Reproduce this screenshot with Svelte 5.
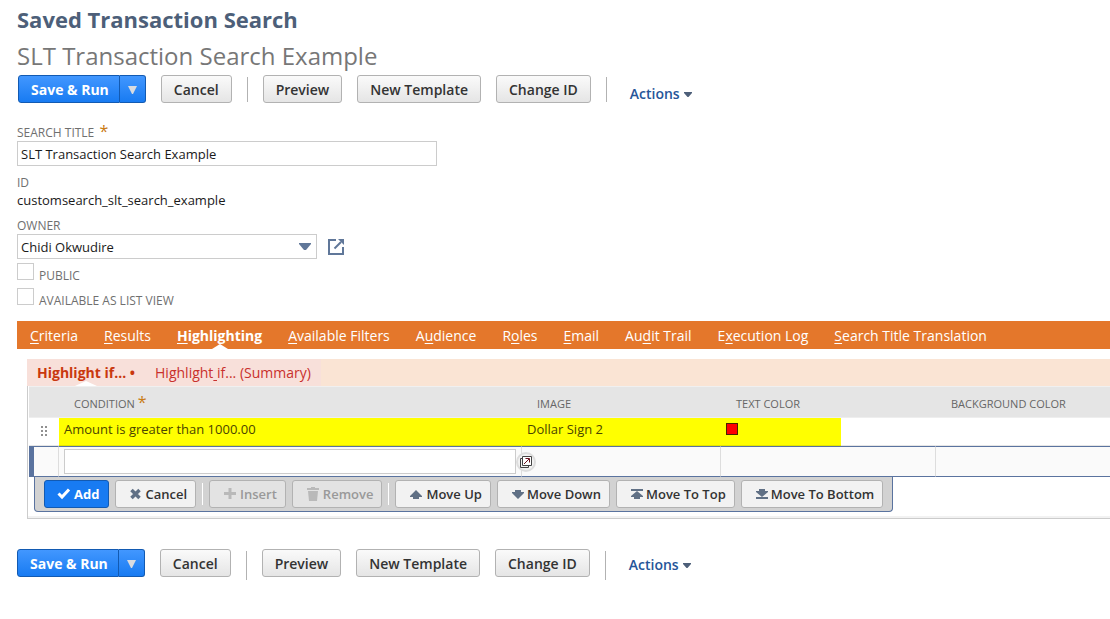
<script>
  // "key" is the index of the underlined access key letter
  const tabs = [
    { label: 'Criteria', key: 0 },
    { label: 'Results', key: 0 },
    { label: 'Highlighting', key: 0 },
    { label: 'Available Filters', key: 0 },
    { label: 'Audience', key: 1 },
    { label: 'Roles', key: 1 },
    { label: 'Email', key: 0 },
    { label: 'Audit Trail', key: 2 },
    { label: 'Execution Log', key: 1 },
    { label: 'Search Title Translation', key: 0 }
  ];

  let activeTab = 'Highlighting';
  let title = 'SLT Transaction Search Example';
  let owner = 'Chidi Okwudire';
  let isPublic = false;
  let listView = false;
  let condition = '';
</script>

{#snippet buttonBar(place)}
  <div class="button-bar {place}">
    <div class="split">
      <button class="btn primary">Save &amp; Run</button>
      <button class="btn primary arrow" aria-label="More save options">
        <svg width="9" height="8" viewBox="0 0 9 8"><path d="M0 0h9L5 8H4z" fill="#d8dbe0" /></svg>
      </button>
    </div>
    <button class="btn">Cancel</button>
    <span class="separator"></span>
    <button class="btn">Preview</button>
    <button class="btn">New Template</button>
    <button class="btn">Change ID</button>
    <span class="separator"></span>
    <a class="actions" href="#actions">
      Actions
      <svg width="8" height="5" viewBox="0 0 8 5"><path d="M0 0h8v1L4.500 5h-1L0 1z" fill="#4d5f79" /></svg>
    </a>
  </div>
{/snippet}

<main>
  <h1>Saved Transaction Search</h1>
  <h2>SLT Transaction Search Example</h2>

  {@render buttonBar('top')}

  <form on:submit|preventDefault>
    <div class="field">
      <label for="title">SEARCH TITLE <span class="required wide">*</span></label>
      <input id="title" class="text" type="text" bind:value={title} />
    </div>
    <div class="field">
      <span class="label">ID</span>
      <span class="value">customsearch_slt_search_example</span>
    </div>
    <div class="field">
      <label for="owner">OWNER</label>
      <div class="owner-row">
        <div class="select">
          <select id="owner" bind:value={owner}>
            <option>Chidi Okwudire</option>
          </select>
          <svg width="12" height="7" viewBox="0 0 12 7"><path d="M0 0h12v1L7 7H5L0 1z" fill="#607799" /></svg>
        </div>
        <a href="#owner" aria-label="Open owner">
          <svg width="16" height="16" viewBox="0 0 16 16" fill="none" stroke="#607799" stroke-width="2">
            <path d="M8 1H1v14h14V8" />
            <path d="M6.500 9.500L13 3" />
            <path d="M10 0h6v6z" fill="#607799" stroke="none" />
          </svg>
        </a>
      </div>
    </div>
    <label class="check"><input type="checkbox" bind:checked={isPublic} /><span>PUBLIC</span></label>
    <label class="check"><input type="checkbox" bind:checked={listView} /><span>AVAILABLE AS LIST VIEW</span></label>
  </form>

  <nav class="tabs">
    {#each tabs as tab}
      <a
        href="#tab"
        class:active={tab.label === activeTab}
        on:click|preventDefault={() => (activeTab = tab.label)}
      >{tab.label.slice(0, tab.key)}<u>{tab.label[tab.key]}</u>{tab.label.slice(tab.key + 1)}</a>
    {/each}
  </nav>

  <section class="panel">
    <nav class="subtabs">
      <a href="#highlight" class="active">Highlight if... •</a>
      <a href="#summary">Highlight<u>&nbsp;</u>if... (Summary)</a>
    </nav>

    <div class="machine">
      <table>
        <colgroup>
          <col class="c-drag" />
          <col class="c-condition" />
          <col class="c-image" />
          <col class="c-color" />
          <col class="c-rest" />
          <col />
        </colgroup>
        <thead>
          <tr>
            <th></th>
            <th>CONDITION <span class="required">*</span></th>
            <th>IMAGE</th>
            <th colspan="2">TEXT COLOR</th>
            <th>BACKGROUND COLOR</th>
          </tr>
        </thead>
        <tbody>
          <tr class="line">
            <td class="drag">
              <svg width="7" height="10" viewBox="0 0 7 10" fill="#909090">
                <path d="M0 0h2v2H0zM4 0h2v2H4zM0 4h2v2H0zM4 4h2v2H4zM0 8h2v2H0zM4 8h2v2H4z" />
              </svg>
            </td>
            <td class="hit">Amount is greater than 1000.00</td>
            <td class="hit">Dollar Sign 2</td>
            <td class="hit"><span class="swatch"></span></td>
            <td></td>
            <td></td>
          </tr>
          <tr class="edit">
            <td></td>
            <td>
              <div class="lookup">
                <input type="text" aria-label="Condition" bind:value={condition} />
                <button aria-label="Set condition">
                  <svg width="12" height="12" viewBox="0 0 12 12" fill="none">
                    <path d="M2.500 2.500h-2v9h8v-2" stroke="#444" />
                    <path d="M2.500 .5h9v9h-9z" fill="#fff" stroke="#444" />
                    <path d="M4 8L9 3M5.500 2.500H9.500V6.500" stroke="#6b1420" />
                  </svg>
                </button>
              </div>
            </td>
            <td></td>
            <td colspan="2"></td>
            <td></td>
          </tr>
        </tbody>
      </table>

      <div class="row-tools">
        <button class="tool add">
          <svg width="14" height="12" viewBox="0 0 14 12"><path d="M1.500 5.500L5 9l7-7.500" fill="none" stroke="#fff" stroke-width="3" /></svg>Add
        </button>
        <button class="tool">
          <svg width="12" height="12" viewBox="0 0 12 12"><path d="M1.500 2l8 8M9.500 2l-8 8" stroke="#607085" stroke-width="3.500" /></svg>Cancel
        </button>
        <span class="split-line"></span>
        <button class="tool" disabled>
          <svg width="13" height="12" viewBox="0 0 13 12"><path d="M6 0v11M0 5.500h12" stroke="#b9b9b9" stroke-width="3" /></svg>Insert
        </button>
        <button class="tool" disabled>
          <svg width="13" height="14" viewBox="0 0 13 14" fill="#b9b9b9"><path d="M0 1h4V0h4v1h4v2H0zM1 4h10l-1 10H2z" /></svg>Remove
        </button>
        <span class="split-line"></span>
        <button class="tool">
          <svg width="13" height="12" viewBox="0 0 13 12" fill="#607085"><path d="M6 2l6 6v1H9v2H3V9H0V8z" /></svg>Move Up
        </button>
        <button class="tool">
          <svg width="12" height="12" viewBox="0 0 12 12" fill="#607085"><path d="M3 2h6v2h3v1L6 11 0 5V4h3z" /></svg>Move Down
        </button>
        <button class="tool">
          <svg width="12" height="12" viewBox="0 0 12 12" fill="#607085"><path d="M0 1h12v2H0zM6 3l6 5v1H9v2H3V9H0V8z" /></svg>Move To Top
        </button>
        <button class="tool">
          <svg width="12" height="12" viewBox="0 0 12 12" fill="#607085"><path d="M0 9h12v2H0zM3 1h6v2h3v1L6 9 0 4V3h3z" /></svg>Move To Bottom
        </button>
      </div>
    </div>
  </section>

  {@render buttonBar('bottom')}
</main>

<style>
  :global(body) {
    margin: 0;
    background: #fff;
  }

  main {
    padding: 1px 0 0 17px;
    font-family: 'Open Sans', 'Liberation Sans', sans-serif;
    font-size: 13px;
    color: #1a1a1a;
    overflow: hidden;
  }

  main * {
    box-sizing: border-box;
  }

  button,
  input,
  select {
    font-family: inherit;
    margin: 0;
  }

  svg {
    display: block;
    flex: none;
  }

  h1,
  h2 {
    margin: 0;
  }

  h1 {
    font-size: 22px;
    line-height: 36px;
    font-weight: 700;
    color: #4d5f79;
  }

  h2 {
    padding-bottom: 1px;
    font-size: 24px;
    line-height: 37px;
    font-weight: 400;
    color: #777;
  }

  /* Main buttons */
  .button-bar {
    display: flex;
    align-items: flex-start;
    gap: 15px;
  }

  .button-bar.top {
    padding-left: 1px;
  }

  .button-bar.bottom {
    margin-top: 30px;
  }

  .btn {
    height: 28px;
    padding: 2px 12px 0;
    border: 1px solid #b2b2b2;
    border-radius: 3px;
    background: linear-gradient(#fafafa, #e5e5e5);
    color: #333;
    font-size: 14px;
    font-weight: 600;
    line-height: 20px;
    white-space: nowrap;
  }

  .split {
    display: flex;
  }

  .btn.primary {
    padding: 2px 10px 0 12px;
    border-color: #125ab2;
    border-radius: 3px 0 0 3px;
    background: linear-gradient(#4297ff, #187bf2);
    color: #fff;
    font-weight: 700;
  }

  .btn.primary.arrow {
    display: flex;
    align-items: center;
    padding: 2px 8px 0;
    border-left: none;
    border-radius: 0 3px 3px 0;
  }

  .separator {
    width: 1px;
    height: 25px;
    margin-top: 2px;
    background: #b2b2b2;
  }

  .bottom .separator {
    height: 29px;
  }

  .actions {
    display: flex;
    align-items: center;
    gap: 4px;
    padding: 9px 8px 0;
    line-height: 20px;
    font-size: 14px;
    font-weight: 600;
    color: #255599;
    text-decoration: none;
  }

  .bottom .actions {
    padding-top: 6px;
  }

  /* Header fields */
  form {
    display: flex;
    flex-direction: column;
    margin-top: 19px;
  }

  .field {
    display: flex;
    flex-direction: column;
    margin-bottom: 7px;
  }

  .field label,
  .label,
  .check {
    font-size: 12px;
    line-height: 16px;
    color: #6f6f6f;
  }

  .field label,
  .label {
    padding-top: 2px;
  }

  .required {
    font-size: 16px;
    line-height: 12px;
    color: #c97b12;
  }

  .wide {
    margin-left: 2px;
  }

  .value {
    line-height: 18px;
  }

  .text,
  select {
    border: 1px solid #ccc;
    border-radius: 0;
    background: #fff;
    color: #1a1a1a;
    font-size: 13px;
    height: 25px;
    padding: 0 3px;
  }

  .text {
    width: 420px;
  }

  .owner-row {
    display: flex;
    align-items: center;
    gap: 11px;
  }

  .select {
    position: relative;
    width: 300px;
  }

  select {
    display: block;
    width: 100%;
    appearance: none;
  }

  .select svg {
    position: absolute;
    right: 6px;
    top: 9px;
    pointer-events: none;
  }

  .check {
    display: flex;
    gap: 5px;
    height: 25px;
  }

  .check span {
    padding-top: 5px;
  }

  .check input {
    appearance: none;
    width: 17px;
    height: 17px;
    border: 1px solid #ccc;
    background: #fff;
  }

  .check input:checked {
    background: #607799;
  }

  .field:nth-child(3) {
    margin-bottom: 4px;
  }

  /* Tabs */
  .tabs {
    display: flex;
    margin-top: 8px;
    background: #e4772b;
  }

  .tabs a {
    position: relative;
    padding: 2px 13px 0;
    font-size: 14px;
    line-height: 26px;
    color: #fff;
    text-decoration: none;
    white-space: nowrap;
  }

  .tabs .active {
    font-weight: 700;
  }

  u {
    text-underline-offset: 2px;
  }

  .tabs .active::after,
  .subtabs .active::after {
    content: '';
    position: absolute;
    left: 50%;
    bottom: 0;
    transform: translateX(-50%);
    border: 8px solid transparent;
    border-top: none;
    border-bottom: 5px solid #fff;
  }

  .subtabs .active::after {
    border-left-width: 11px;
    border-right-width: 11px;
  }

  .panel {
    margin: 10px 0 0 10px;
  }

  .subtabs {
    display: flex;
    background: #fae4d4;
  }

  .subtabs a {
    position: relative;
    padding: 0 10px;
    background: #f8e0da;
    font-size: 14px;
    line-height: 27px;
    color: #c9302c;
    text-decoration: none;
    white-space: nowrap;
  }

  .subtabs .active {
    font-weight: 700;
    color: #c9380e;
  }

  /* Line list */
  .machine {
    padding: 0 0 6px 1px;
    border-left: 1px solid #ccc;
    border-bottom: 1px solid #ccc;
    box-shadow: inset 0 -2px #f2f2f2;
  }

  table {
    width: 100%;
    table-layout: fixed;
    border-spacing: 0;
    border-top: 1px solid #f0f0f0;
  }

  .c-drag {
    width: 30px;
  }

  .c-condition {
    width: 463px;
  }

  .c-image {
    width: 199px;
  }

  .c-color {
    width: 120px;
  }

  .c-rest {
    width: 95px;
  }

  th {
    height: 31px;
    padding: 3px 0 0 15px;
    background: #e5e5e5;
    border-bottom: 1px solid #eee;
    font-size: 11px;
    font-weight: 400;
    line-height: 18px;
    color: #666;
    text-align: left;
  }

  td {
    padding: 0 5px;
  }

  .line td {
    height: 28px;
    padding-bottom: 6px;
    border-bottom: 1px solid #e5e5e5;
    line-height: 18px;
  }

  .line .hit {
    background: #ff0;
    border-bottom-color: #e5e500;
    color: #4a4400;
  }

  .line .drag {
    padding: 0 0 2px 12px;
  }

  .swatch {
    display: block;
    width: 12px;
    height: 12px;
    border: 1px solid #4a2200;
    background: #f00;
  }

  .edit td {
    height: 31px;
    background: #fafafa;
    border-top: 1px solid #5a739f;
    border-bottom: 1px solid #5a739f;
    border-right: 1px solid #ddd;
  }

  .edit td:first-child {
    border-left: 5px solid #5a739f;
  }

  .edit td:last-child {
    border-right: none;
  }

  .lookup {
    position: relative;
  }

  .lookup input {
    display: block;
    width: 100%;
    height: 25px;
    padding: 0 3px;
    border: 1px solid #ccc;
    background: #fff;
    font-size: 13px;
  }

  .lookup button {
    position: absolute;
    right: -20px;
    top: 3px;
    width: 20px;
    height: 20px;
    padding: 2px;
    border: 2px solid #ddd;
    border-radius: 50%;
    background: #f2f2f2;
  }

  /* Buttons under the edited line */
  .row-tools {
    display: flex;
    align-items: center;
    gap: 6px;
    width: fit-content;
    margin-left: 5px;
    padding: 3px 9px;
    border: 1px solid #5a739f;
    border-top: none;
    border-radius: 0 0 4px 4px;
    background: #d2d2d2;
  }

  .tool {
    display: flex;
    align-items: center;
    gap: 3px;
    height: 28px;
    padding: 0 8px 0 14px;
    border: 1px solid #b2b2b2;
    border-radius: 3px;
    background: #f2f2f2;
    color: #333;
    font-size: 13px;
    font-weight: 600;
    white-space: nowrap;
  }

  .tool.add {
    padding: 0 9px 0 12px;
    border-color: #125ab2;
    background: #187bf2;
    color: #fff;
    font-weight: 700;
  }

  .tool:disabled {
    background: #e3e3e3;
    color: #999;
  }

  .split-line {
    width: 1px;
    height: 22px;
    background: #fff;
  }
</style>
